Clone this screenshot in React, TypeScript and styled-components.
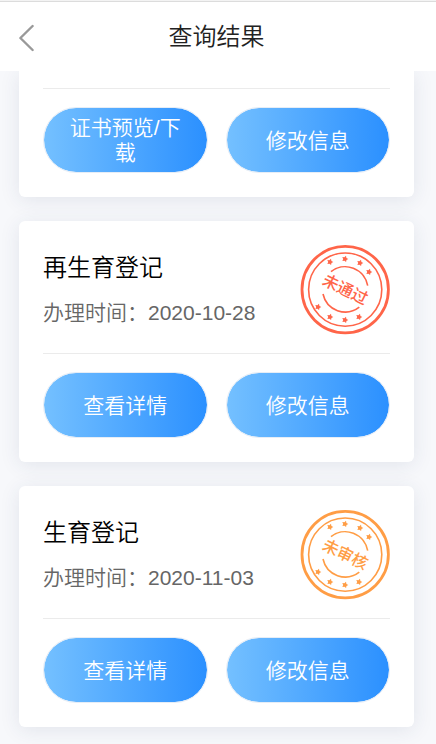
import React from "react";
import styled, { createGlobalStyle } from "styled-components";

const GlobalStyle = createGlobalStyle`
  * { box-sizing: border-box; }
  body {
    margin: 0;
    background: #f7f8fb;
    font-family: "Liberation Sans", "Noto Sans CJK SC", sans-serif;
    font-weight: 350;
  }
`;

const Page = styled.div`
  min-height: 100vh;
  overflow: hidden;
`;

const Header = styled.header`
  position: sticky;
  top: 0;
  z-index: 1;
  display: grid;
  grid-template-columns: 48px 1fr 48px;
  align-items: center;
  height: 71px;
  padding: 3px 22px 0 19px;
  background: linear-gradient(#f3f3f3 1px, #dcdcdc 1px, #dcdcdc 2px, #fff 2px);
`;

const BackButton = styled.button`
  display: flex;
  padding: 2px 0 0;
  border: 0;
  background: none;
  cursor: pointer;
`;

const PageTitle = styled.h1`
  margin: 0;
  color: #222;
  font-size: 24px;
  font-weight: inherit;
  line-height: 36px;
  text-align: center;
`;

const List = styled.main`
  display: flex;
  flex-direction: column;
  gap: 24px;
  padding: 0 22px 16px 19px;
`;

const Actions = styled.div`
  display: grid;
  grid-template-columns: 1fr 1fr;
  gap: 18px;
  margin-top: 18px;
  padding-top: 18px;
  border-top: 1px solid #ebebeb;
`;

const Card = styled.article<{ $continued?: boolean }>`
  padding: ${(p) => (p.$continued ? "0 24px 24px" : "24px")};
  border-radius: ${(p) => (p.$continued ? "0 0 6px 6px" : "6px")};
  background: #fff;
  box-shadow: 0 3px 20px rgba(40, 60, 100, 0.1);

  ${Actions}:first-child {
    margin-top: 17px;
  }
`;

const Summary = styled.div`
  display: flex;
  justify-content: space-between;
`;

const RecordTitle = styled.h2`
  margin: 0;
  color: #000;
  font-size: 24px;
  font-weight: inherit;
  line-height: 46px;
`;

const RecordDate = styled.p`
  margin: 0;
  color: #666;
  font-size: 21px;
  line-height: 44px;
`;

const ActionButton = styled.button`
  height: 66px;
  padding: 0 24px;
  border: 1px solid #e6edf6;
  border-radius: 33px;
  background: linear-gradient(to right, #74c0ff, #2b90ff) padding-box;
  color: #fff;
  font: inherit;
  font-size: 21px;
  line-height: 25px;
  cursor: pointer;
`;

const StampDrawing = styled.svg`
  flex: none;
  font-family: "Noto Sans CJK SC", sans-serif;
  font-size: 16px;
  font-weight: 500;
`;

const STARS = [
  [30, 17], [45, 14], [60, 18], [69, 27],
  [18, 62], [30, 72], [45, 75], [59, 72],
];

function starPoints(cx: number, cy: number) {
  return Array.from({ length: 10 }, (_, i) => {
    const r = i % 2 ? 1.8 : 3.3;
    const a = (i * Math.PI) / 5 - Math.PI / 2 + 0.3;
    return `${(cx + r * Math.cos(a)).toFixed(2)},${(cy + r * Math.sin(a)).toFixed(2)}`;
  }).join(" ");
}

function Stamp({ text, color }: { text: string; color: string }) {
  return (
    <StampDrawing width="90" height="90" viewBox="0 0 90 90" role="img" aria-label={text}>
      <g fill="none" stroke={color}>
        <circle cx="45.2" cy="44.6" r="43.2" strokeWidth="2.8" />
        <circle cx="45.2" cy="44.6" r="36.6" strokeWidth="1.6" />
        <path d="M31 26.7A22.8 22.8 0 0 1 67.7 40.7M23 49A22.8 22.8 0 0 0 59.3 62.2" strokeWidth="1.6" />
      </g>
      <g fill={color}>
        {STARS.map(([x, y]) => (
          <polygon key={`${x}-${y}`} points={starPoints(x, y)} />
        ))}
        <text x="45" y="50" textAnchor="middle" transform="rotate(26 45 45)">{text}</text>
      </g>
    </StampDrawing>
  );
}

const RECORDS = [
  { title: "再生育登记", date: "2020-10-28", status: "未通过", color: "#ff6549" },
  { title: "生育登记", date: "2020-11-03", status: "未审核", color: "#ff9d45" },
];

export default function App() {
  return (
    <Page>
      <GlobalStyle />
      <Header>
        <BackButton type="button" aria-label="返回">
          <svg width="16" height="28" viewBox="0 0 16 28" fill="none" stroke="#999" strokeWidth="2.4" strokeLinecap="round" strokeLinejoin="round">
            <path d="M13.6 2L1.4 14L13.6 26" />
          </svg>
        </BackButton>
        <PageTitle>查询结果</PageTitle>
      </Header>
      <List>
        <Card $continued>
          <Actions>
            <ActionButton type="button">证书预览/下载</ActionButton>
            <ActionButton type="button">修改信息</ActionButton>
          </Actions>
        </Card>
        {RECORDS.map((r) => (
          <Card key={r.title}>
            <Summary>
              <div>
                <RecordTitle>{r.title}</RecordTitle>
                <RecordDate>办理时间：{r.date}</RecordDate>
              </div>
              <Stamp text={r.status} color={r.color} />
            </Summary>
            <Actions>
              <ActionButton type="button">查看详情</ActionButton>
              <ActionButton type="button">修改信息</ActionButton>
            </Actions>
          </Card>
        ))}
      </List>
    </Page>
  );
}
